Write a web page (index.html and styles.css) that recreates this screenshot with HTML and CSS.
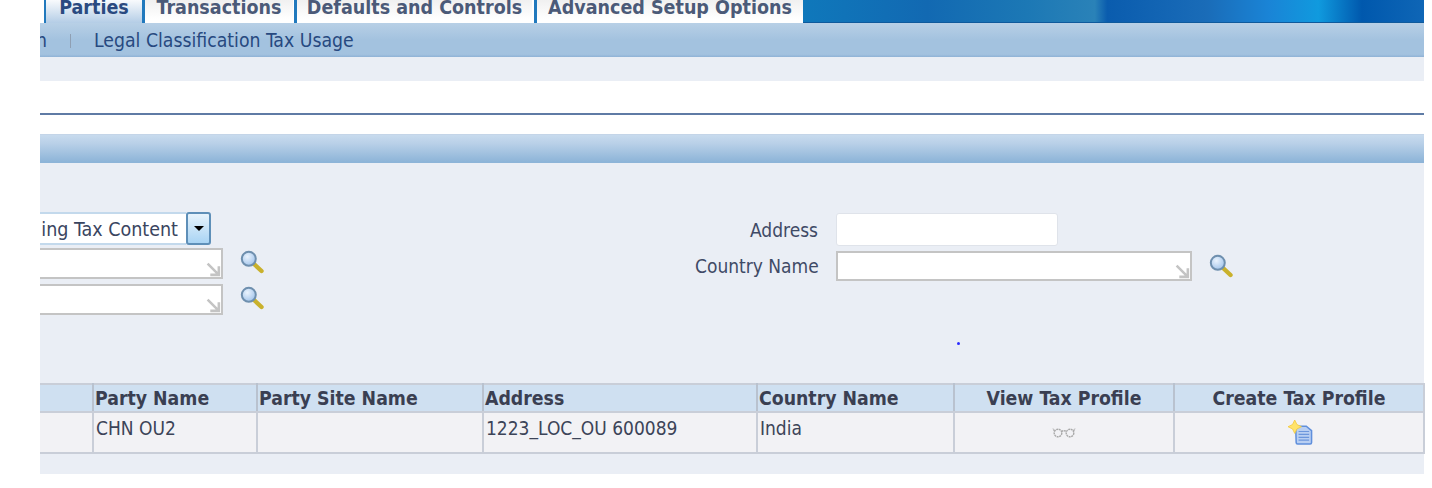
FILE: index.html
```html
<!DOCTYPE html>
<html lang="en">
<head>
<meta charset="utf-8">
<title>Parties</title>
<link rel="stylesheet" href="styles.css">
</head>
<body>
<main class="page">
  <nav class="tabs">
    <span class="sep first"></span>
    <a class="tab active w-parties">Parties</a>
    <span class="sep s3"></span>
    <a class="tab w-trans">Transactions</a>
    <span class="sep s4"></span>
    <a class="tab w-def">Defaults and Controls</a>
    <span class="sep s5"></span>
    <a class="tab w-adv">Advanced Setup Options</a>
    <div class="banner"></div>
  </nav>
  <nav class="subnav">
    <span class="clip-left"><span>Classification</span></span>
    <span class="pipe"></span>
    <a class="sublink">Legal Classification Tax Usage</a>
  </nav>
  <div class="strip"></div>
  <div class="title-area"></div>
  <div class="section-bar"></div>
  <section class="panel">
    <form class="search">
      <div class="col-left">
        <div class="select-row">
          <div class="select"><span>ing Tax Content</span></div>
          <div class="select-btn"><i class="caret"></i></div>
        </div>
        <div class="lov-row">
          <div class="lov"><svg class="grip" viewBox="0 0 14 14"><path d="M1.500 1.500 L12 12 M12 4 V12 H4" fill="none" stroke="#c4c4c4" stroke-width="2.400"/></svg></div>
          <svg class="mag" viewBox="0 0 24 24"><use href="#magnifier"/></svg>
        </div>
        <div class="lov-row">
          <div class="lov"><svg class="grip" viewBox="0 0 14 14"><path d="M1.500 1.500 L12 12 M12 4 V12 H4" fill="none" stroke="#c4c4c4" stroke-width="2.400"/></svg></div>
          <svg class="mag" viewBox="0 0 24 24"><use href="#magnifier"/></svg>
        </div>
      </div>
      <div class="col-right">
        <div class="field">
          <label class="label">Address</label>
          <div class="text-input"></div>
        </div>
        <div class="field field-country">
          <label class="label">Country Name</label>
          <div class="lov lov-wide"><svg class="grip" viewBox="0 0 14 14"><path d="M1.500 1.500 L12 12 M12 4 V12 H4" fill="none" stroke="#c4c4c4" stroke-width="2.400"/></svg></div>
          <svg class="mag" viewBox="0 0 24 24"><use href="#magnifier"/></svg>
        </div>
      </div>
    </form>
    <div class="dot-row"><i class="dot"></i></div>
    <table class="results">
      <colgroup>
        <col class="c0"><col class="c1"><col class="c2"><col class="c3"><col class="c4"><col class="c5"><col class="c6">
      </colgroup>
      <thead>
        <tr>
          <th></th>
          <th>Party Name</th>
          <th>Party Site Name</th>
          <th>Address</th>
          <th>Country Name</th>
          <th class="center">View Tax Profile</th>
          <th class="center">Create Tax Profile</th>
        </tr>
      </thead>
      <tbody>
        <tr>
          <td></td>
          <td>CHN OU2</td>
          <td></td>
          <td>1223_LOC_OU 600089</td>
          <td>India</td>
          <td class="center icon-cell">
            <svg class="glasses" viewBox="0 0 24 12"><g fill="none" stroke="#a9a9a9" stroke-width="1.400" stroke-dasharray="2 .6"><circle cx="6" cy="7" r="3.800"/><circle cx="18" cy="7" r="3.800"/><path d="M9.500 5.500 Q12 4 14.500 5.500 M2.500 5 L1 2.500 M21.500 5 L23 2.500"/></g></svg>
          </td>
          <td class="center icon-cell">
            <svg class="create" viewBox="0 0 26 26">
              <path d="M8 6.500 H19 L24.500 11 V23.500 Q24.500 25 23 25 H10 Q8.500 25 8.500 23.500 Z" fill="#b9cff2" stroke="#5f8fdc" stroke-width="1.600"/>
              <path d="M11 12 H22 M11 15 H22 M11 18 H22 M11 21 H22" stroke="#6d97dc" stroke-width="1.200"/>
              <path d="M7 0 L9.300 4.700 L14 7 L9.300 9.300 L7 14 L4.700 9.300 L0 7 L4.700 4.700 Z" fill="#ffe36b" stroke="#f3c83a" stroke-width=".8"/>
            </svg>
          </td>
        </tr>
      </tbody>
    </table>
  </section>
</main>
<svg class="defs" aria-hidden="true">
  <defs>
    <radialGradient id="lens" cx=".4" cy=".35" r=".7"><stop offset="0" stop-color="#eaf3fd"/><stop offset="1" stop-color="#9fc2ea"/></radialGradient>
    <symbol id="magnifier" viewBox="0 0 24 24">
      <path d="M13.500 13.500 L21.500 21" stroke="#c9b12c" stroke-width="4.400" stroke-linecap="round"/>
      <circle cx="8.800" cy="8.800" r="7" fill="url(#lens)" stroke="#6e8fae" stroke-width="2"/>
    </symbol>
  </defs>
</svg>
</body>
</html>
```
FILE: styles.css
```css
* { box-sizing: border-box; }
html, body { margin: 0; padding: 0; background: #fff; }
body {
  width: 1432px;
  height: 488px;
  overflow: hidden;
  font-family: "DejaVu Sans Condensed", "DejaVu Sans", sans-serif;
  font-stretch: condensed;
  color: #3c4660;
}
.defs { width: 0; height: 0; display: block; }
.page { margin-left: 40px; width: 1384px; }

.tabs { display: flex; height: 23px; overflow: hidden; }
.sep { flex: none; width: 3px; background: #2179bd; }
.first { width: 2px; margin-left: 4px; }
.s4 { margin-left: 1px; }
.s5 { margin-left: 2px; }
.tab {
  flex: none;
  height: 28px;
  margin-top: -5px;
  line-height: 25px;
  font-size: 19.500px;
  font-weight: 700;
  text-align: center;
  white-space: nowrap;
  color: #4b5a78;
  background: linear-gradient(#ececec, #fff 85%);
}
.tab.active { color: #2a4a80; background: linear-gradient(#fff 10%, #b4cde6 100%); }
.w-parties { width: 96px; }
.w-trans { width: 148px; }
.w-def { width: 235px; }
.w-adv { width: 266px; }
.banner {
  flex: 1;
  background: linear-gradient(90deg, #0f78bb 0, #1269b2 20%, #1c78b5 36%, #2a82b8 47%, #0a5cae 49%, #1a6cb8 65%, #1a84d6 75%, #109ade 83%, #0058ad 90%, #0f66b6 100%);
  border-bottom: 1px solid #0f5a9c;
}

.subnav {
  display: flex;
  align-items: center;
  height: 34px;
  padding-top: 1px;
  background: linear-gradient(#b8d0e6, #a3c2df 50%, #a3c2df 92%, #8fb2d6);
  font-size: 19.250px;
  color: #27497f;
}
.clip-left { display: flex; justify-content: flex-end; width: 7px; overflow: hidden; flex: none; }
.pipe { width: 1px; height: 14px; margin-left: 23px; background: #8f9fb3; flex: none; }
.sublink { margin-left: 23px; white-space: nowrap; }

.strip { height: 24px; background: #eaeef5; }
.title-area { height: 34px; border-bottom: 2px solid #5f7ba5; background: #fff; }
.section-bar {
  height: 29px;
  margin-top: 19px;
  border-top: 1px solid #c4d5e8;
  background: linear-gradient(#c8dbee, #b9d0e8 30%, #8db4d8 96%);
}

.panel { height: 311px; background: #eaeef5; padding-top: 49px; }
.search { display: flex; height: 171px; }
.col-left { width: 655px; flex: none; }
.select-row { display: flex; height: 33px; }
.select {
  width: 146px;
  overflow: hidden;
  border-top: 2px solid #c3d9ec;
  border-bottom: 2px solid #c3d9ec;
  background: #fff;
  font-size: 19.500px;
  color: #3a4560;
  text-align: right;
  white-space: nowrap;
  line-height: 31px;
  padding-right: 8px;
}
.select-btn {
  width: 25px;
  border: 2px solid #5e8fb8;
  border-radius: 3px;
  background: linear-gradient(#e7f3fc, #a9d4f4);
  display: flex;
  align-items: center;
  justify-content: center;
}
.caret { width: 0; height: 0; border: 5px solid transparent; border-top: 5px solid #000; border-bottom: 0; }
.lov-row { display: flex; align-items: flex-start; height: 36px; margin-top: 3px; }
.lov-row + .lov-row { margin-top: 0; }
.lov {
  width: 183px;
  height: 31px;
  background: #fff;
  border: 2px solid #c4c4c4;
  border-left: 0;
  display: flex;
  align-items: flex-end;
  justify-content: flex-end;
}
.grip { width: 15px; height: 15px; display: block; }
.mag { width: 24px; height: 24px; margin-left: 17px; margin-top: 2px; flex: none; }

.col-right { flex: 1; padding-top: 1px; }
.field { display: flex; align-items: center; height: 33px; }
.field-country { margin-top: 5px; height: 30px; }
.label {
  width: 123px;
  text-align: right;
  font-size: 19px;
  color: #3f4a66;
  white-space: nowrap;
}
.text-input {
  width: 222px;
  height: 33px;
  margin-left: 18px;
  background: #fff;
  border: 1px solid #dfe3ea;
  border-radius: 3px;
}
.lov-wide {
  width: 356px;
  height: 30px;
  margin-left: 18px;
  border-left: 2px solid #c4c4c4;
}
.field-country .mag { margin-top: 0; margin-left: 17px; }

.dot-row { height: 0; position: relative; }
.dot {
  position: absolute;
  left: 917px;
  top: -41px;
  width: 3px;
  height: 3px;
  border-radius: 50%;
  background: #2a2aff;
}

.results {
  width: 1384px;
  table-layout: fixed;
  border-collapse: collapse;
  font-size: 19px;
  border-top: 2px solid #c9ced8;
  border-bottom: 2px solid #c9ced8;
  border-right: 2px solid #c9ced8;
}
.c0 { width: 53px; }
.c1 { width: 164px; }
.c2 { width: 226px; }
.c3 { width: 274px; }
.c4 { width: 197px; }
.c5 { width: 220px; }
.c6 { width: 250px; }
.results th {
  height: 28px;
  padding: 1px 1px 0;
  text-align: left;
  background: #cfe0f1;
  font-weight: 700;
  font-size: 19.300px;
  color: #3a3f52;
  border-left: 2px solid #b9c2cf;
  border-bottom: 2px solid #c9ced8;
  white-space: nowrap;
}
.results th:first-child, .results td:first-child { border-left: 0; }
.results td {
  height: 41px;
  padding: 3px 2px 0;
  vertical-align: top;
  background: #f2f2f5;
  color: #3c4458;
  border-left: 2px solid #c9ced8;
  line-height: 24px;
  white-space: nowrap;
}
.results .center { text-align: center; }
.results .icon-cell { padding: 7px 0 0; }
.glasses { width: 24px; height: 12px; display: block; margin: 6px auto 0; }
.create { width: 25px; height: 25px; display: block; margin: 0 auto; position: relative; left: 1px; }
```
